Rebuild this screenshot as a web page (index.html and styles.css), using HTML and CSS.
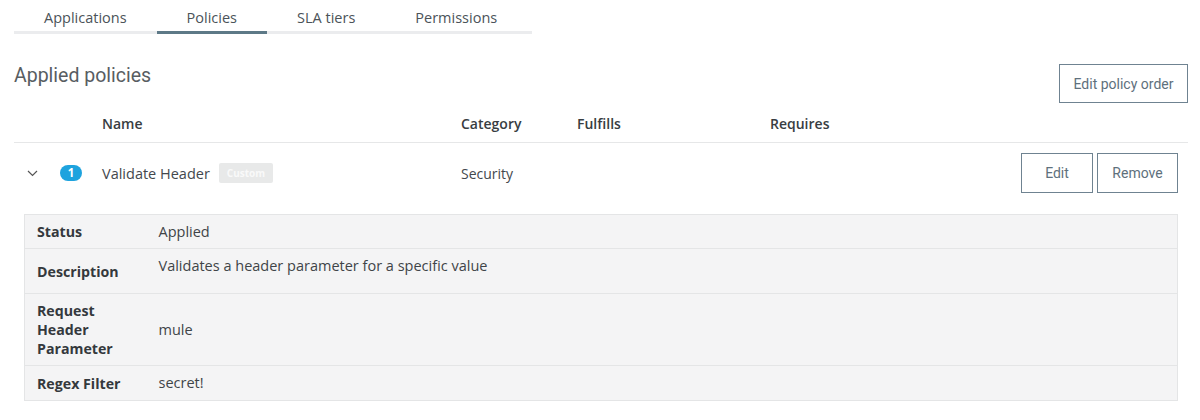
FILE: index.html
```html
<!DOCTYPE html>
<html lang="en">
<head>
    <meta charset="UTF-8">
    <meta name="viewport" content="width=device-width, initial-scale=1.0">
    <title>Policies</title>
    <link rel="stylesheet" href="styles.css">
</head>
<body>
    <div class="page">
        <nav class="tabs">
            <a class="tab">Applications</a>
            <a class="tab active">Policies</a>
            <a class="tab">SLA tiers</a>
            <a class="tab">Permissions</a>
        </nav>

        <div class="section-head">
            <h2 class="section-title">Applied policies</h2>
            <button class="btn btn-order">Edit policy order</button>
        </div>

        <div class="policy-grid policy-head">
            <div></div>
            <div>Name</div>
            <div>Category</div>
            <div>Fulfills</div>
            <div>Requires</div>
            <div></div>
        </div>

        <div class="policy-grid policy-row">
            <div class="toggle">
                <svg class="chevron" width="11" height="7" viewBox="0 0 11 7">
                    <path d="M1 1 L5.5 5.5 L10 1" fill="none" stroke="#555" stroke-width="1.2"/>
                </svg>
                <span class="order-badge">1</span>
            </div>
            <div class="policy-name">Validate Header <span class="tag">Custom</span></div>
            <div>Security</div>
            <div></div>
            <div></div>
            <div class="actions">
                <button class="btn btn-edit">Edit</button>
                <button class="btn btn-remove">Remove</button>
            </div>
        </div>

        <div class="details">
            <table class="details-table">
                <tr>
                    <th>Status</th>
                    <td>Applied</td>
                </tr>
                <tr>
                    <th>Description</th>
                    <td><p>Validates a header parameter for a specific value</p></td>
                </tr>
                <tr>
                    <th>Request Header Parameter</th>
                    <td>mule</td>
                </tr>
                <tr>
                    <th>Regex Filter</th>
                    <td>secret!</td>
                </tr>
            </table>
        </div>
    </div>
</body>
</html>
```

FILE: styles.css
```css
* {
    margin: 0;
    padding: 0;
    box-sizing: border-box;
}
body {
    font-family: "Open Sans", Arial, sans-serif;
    background-color: #fff;
    color: #3f4448;
}
.page {
    padding: 0 12px 0 14px;
}
.tabs {
    display: flex;
    width: 518px;
    border-bottom: 3px solid #ebecee;
}
.tab {
    padding: 8px 30px 3px;
    margin-bottom: -3px;
    font-size: 14.5px;
    line-height: 20px;
    color: #4b5359;
    border-bottom: 3px solid transparent;
    cursor: pointer;
}
.tab.active {
    border-bottom-color: #5d7987;
}
.section-head {
    display: flex;
    justify-content: space-between;
    align-items: flex-start;
    margin-top: 30px;
}
.section-title {
    font-family: Roboto, "Open Sans", sans-serif;
    font-weight: 400;
    font-size: 19.5px;
    line-height: 24px;
    color: #585d62;
}
.btn {
    font-family: Roboto, "Open Sans", sans-serif;
    font-size: 14px;
    color: #5e707c;
    background: #fff;
    border: 1px solid #6f8391;
    height: 40px;
    cursor: pointer;
}
.btn-order {
    width: 129px;
    height: 39px;
}
.btn-edit {
    width: 72px;
}
.btn-remove {
    width: 81px;
}
.policy-grid {
    display: grid;
    grid-template-columns: 88px 359px 116px 193px 1fr auto;
    align-items: center;
    font-size: 14px;
}
.policy-head {
    padding: 11px 0 8px;
    line-height: 20px;
    font-weight: 600;
    color: #383d42;
    border-bottom: 1px solid #e6e7e8;
}
.policy-row {
    padding: 10px 0;
    color: #43484d;
}
.toggle {
    display: flex;
    align-items: center;
    padding-left: 13px;
}
.chevron {
    display: block;
}
.order-badge {
    margin-left: 22px;
    width: 22px;
    height: 16px;
    border-radius: 8px;
    background: #1ea3de;
    color: #fff;
    font-size: 11.5px;
    font-weight: 700;
    line-height: 16px;
    text-align: center;
}
.policy-name {
    font-size: 14.5px;
    display: flex;
    align-items: center;
    gap: 9px;
}
.tag {
    display: inline-block;
    background: #e8e9e9;
    color: #f9f9f9;
    font-size: 10px;
    font-weight: 700;
    padding: 0 8px;
    height: 20px;
    line-height: 20px;
    border-radius: 2px;
}
.actions {
    display: flex;
    gap: 4px;
    padding-right: 10px;
}
.details {
    margin: 11px 10px 0;
}
.details-table {
    width: 100%;
    border-collapse: collapse;
    background: #f4f4f5;
    font-size: 14px;
    line-height: 19px;
}
.details-table th,
.details-table td {
    border: 1px solid #e4e5e6;
    padding: 7px 12px;
    vertical-align: middle;
    text-align: left;
}
.details-table th {
    width: 122px;
    font-size: 14.2px;
    font-weight: 700;
    color: #34393d;
    border-right: none;
}
.details-table td {
    font-size: 14.5px;
    color: #3f4448;
    border-left: none;
}
.details-table tr:nth-child(n+2) td {
    padding-bottom: 8px;
}
.details-table td p {
    margin-bottom: 10px;
}
```
